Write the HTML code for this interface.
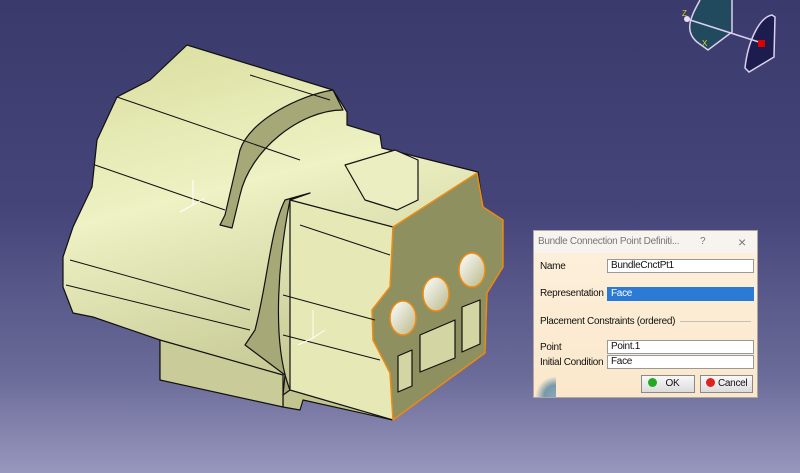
<!DOCTYPE html>
<html><head><meta charset="utf-8"><style>
body{margin:0;width:800px;height:473px;overflow:hidden;background:linear-gradient(#3a3a6c 0%,#45457a 45%,#6c6c9a 80%,#9897bd 100%);font-family:"Liberation Sans",sans-serif;position:relative}
.dlg{position:absolute;left:533px;top:230px;width:223px;height:166px;background:linear-gradient(#fdf0dc,#fbe8cc);border:1px solid #b0a8a0;font-size:10px;letter-spacing:-0.3px;color:#111}
.tb{height:22px;background:#f7f3ee;color:#777;line-height:22px;padding-left:4px;position:relative}
.lbl{position:absolute;left:6px}
.in{position:absolute;left:73px;width:142px;height:12px;background:#fff;border:1px solid #999;line-height:12px;padding-left:3px}
.btn{position:absolute;top:144px;height:16px;background:linear-gradient(#f8f8f8,#dcdcdc);border:1px solid #8a8a8a;line-height:16px}
.dot{display:inline-block;width:9px;height:9px;border-radius:50%;vertical-align:-1px;margin:0 6px 0 6px}
</style></head><body>
<svg width="800" height="473" style="position:absolute;left:0;top:0">
<defs>
<linearGradient id="g1" x1="0" y1="0" x2="0.3" y2="1"><stop offset="0" stop-color="#d9dd9c"/><stop offset="0.45" stop-color="#eef2c4"/><stop offset="1" stop-color="#c2c58f"/></linearGradient>
<linearGradient id="h" x1="0" y1="0" x2="1" y2="1"><stop offset="0" stop-color="#fff"/><stop offset="1" stop-color="#b8b88a"/></linearGradient>
</defs>
<g stroke="#111" stroke-width="1.2" stroke-linejoin="round">
<polygon fill="url(#g1)" points="187,45 333,90 347,112 347,125 380,135 382,148 478,172 483,207 503,220 503,267 487,293 485,353 393,420 303,400 300,410 283,407 283,395 160,380 160,340 93,317 73,313 63,287 63,257 73,227 92,187 97,140 117,97 150,80"/>
<polygon fill="#c9cb98" points="160,340 283,375 283,407 160,380"/>
<path fill="#a7a877" d="M333,90 C300,95 250,120 240,150 L225,215 L220,225 L232,228 L240,195 C250,150 300,110 343,110 Z"/>
<path fill="#a7a877" d="M310,193 L285,200 C270,230 268,280 255,330 L245,345 L285,375 L283,395 L290,390 C270,340 280,250 290,200 Z"/>
<polygon fill="#e6e9b5" points="290,200 393,227 393,420 290,390"/>
<path fill="#eaeec0" d="M345,165 L395,150 L418,160 L418,200 L397,210 L365,200 Z"/>
<polygon fill="#8f9060" stroke="#f08a10" stroke-width="1.5" points="477,173 483,207 503,220 503,267 487,293 485,353 393,420 390,373 373,340 372,310 390,287 393,227"/>
<polygon fill="#d3d5a2" points="398,392 412,386 412,350 398,356"/>
<polygon fill="#d3d5a2" points="420,372 455,358 455,320 420,335"/>
<polygon fill="#d3d5a2" points="462,352 480,344 480,300 462,307"/>
<ellipse cx="403" cy="318" rx="13" ry="17" fill="url(#h)" stroke="#f08a10" stroke-width="1.5"/>
<ellipse cx="436" cy="294" rx="13" ry="17" fill="url(#h)" stroke="#f08a10" stroke-width="1.5"/>
<ellipse cx="472" cy="270" rx="13" ry="17" fill="url(#h)" stroke="#f08a10" stroke-width="1.5"/>
<g fill="none" stroke-width="1">
<line x1="117" y1="97" x2="300" y2="160"/><line x1="95" y1="165" x2="225" y2="210"/>
<line x1="70" y1="260" x2="250" y2="310"/><line x1="66" y1="285" x2="250" y2="330"/>
<line x1="300" y1="225" x2="390" y2="255"/><line x1="283" y1="295" x2="375" y2="320"/>
<line x1="283" y1="335" x2="380" y2="360"/><line x1="250" y1="75" x2="330" y2="100"/>
</g></g>
<g stroke="#fff" stroke-width="1" fill="none"><path d="M193,180 V205 L180,212 M193,205 L205,198"/><path d="M313,310 V338 L298,345 M313,338 L325,330"/></g>
<g fill="none" stroke="#ddd0ee" stroke-width="1.5">
<path d="M700,0 C692,15 683,30 697,42 L708,50 L732,32 L732,0" fill="#224a5e"/>
<path d="M772,15 C760,17 748,40 745,68 L749,72 L774,57 L775,17 Z" fill="#1c1c4e"/>
<line x1="687" y1="19" x2="762" y2="43"/>
</g>
<circle cx="687" cy="19" r="3" fill="#e8dff5"/>
<rect x="758" y="40" width="7" height="7" fill="#d00"/>
<text x="682" y="16" fill="#e0d030" font-size="8" font-family="Liberation Sans">Z</text>
<text x="702" y="46" fill="#e0d030" font-size="8" font-family="Liberation Sans">X</text>
</svg>
<div class="dlg">
<div class="tb">Bundle Connection Point Definiti...<span style="position:absolute;left:166px">?</span><span style="position:absolute;left:204px;font-size:14px">×</span></div>
<div class="lbl" style="top:30px">Name</div><div class="in" style="top:28px">BundleCnctPt1</div>
<div class="lbl" style="top:57px">Representation</div><div class="in" style="top:56px;background:#2a7ad6;color:#fff;border-color:#2a7ad6">Face</div>
<div class="lbl" style="top:85px">Placement Constraints (ordered)</div><div style="position:absolute;left:146px;top:90px;width:71px;border-top:1px solid #c8beb4"></div>
<div class="lbl" style="top:111px">Point</div><div class="in" style="top:109px">Point.1</div>
<div class="lbl" style="top:126px">Initial Condition</div><div class="in" style="top:124px">Face</div>
<div class="btn" style="left:107px;width:52px"><span class="dot" style="background:#2a2"></span>&nbsp;OK</div>
<div class="btn" style="left:166px;width:51px"><span class="dot" style="background:#d22;margin:0 3px 0 5px"></span>Cancel</div>
<div style="position:absolute;left:0;top:146px;width:22px;height:20px;background:radial-gradient(circle at 100% 100%,#8ab 0,#79a 40%,transparent 70%)"></div>
</div>
</body></html>
